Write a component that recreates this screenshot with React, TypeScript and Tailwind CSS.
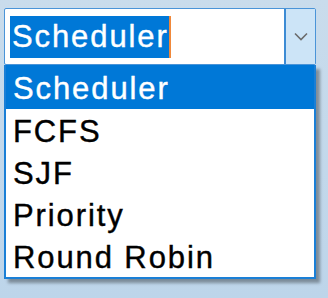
import React from 'react';

const options = ['Scheduler', 'FCFS', 'SJF', 'Priority', 'Round Robin'];

const Chevron = () => (
  <svg width="14" height="9" viewBox="0 0 14 9" fill="none">
    <path d="M1 1.5 L7 7.5 L13 1.5" stroke="#6b6b6b" strokeWidth="1.6" />
  </svg>
);

export default function App() {
  return (
    <div
      className="w-[328px] h-[298px] bg-gradient-to-b from-[#c9dcec] to-[#bdd5ea] pt-[8px] pl-[4px]"
      style={{ fontFamily: '"Liberation Sans", Arial, sans-serif' }}
    >
      <div className="w-[312px]">
        {/* combo box */}
        <div className="flex h-[57px] border border-[#4a94d8] bg-white rounded-[2px]">
          <div className="flex-1 flex items-center pl-[5px]">
            <span className="flex items-center h-[42px] bg-[#0078d7] text-white text-[31px] leading-none tracking-[1.9px] [-webkit-text-stroke:0.4px_currentColor] pl-[2px] border-r-2 border-[#f0883a]">
              Scheduler
            </span>
          </div>
          <div className="w-[31px] flex items-center justify-center bg-[#cce4f7] border-l-2 border-[#3c8bd4]">
            <Chevron />
          </div>
        </div>
        {/* drop-down list */}
        <div className="border-2 border-t-0 border-[#1a7fd6] bg-white shadow-[4px_4px_3px_rgba(0,0,0,0.35)]">
          {options.map((opt, i) => (
            <div
              key={opt}
              className={`flex items-center pl-[7px] pt-[3px] text-[31px] leading-none tracking-[1.9px] [-webkit-text-stroke:0.4px_currentColor] ${
                i === 0 ? 'bg-[#0078d7] text-white h-[44px]' : 'text-black h-[42px]'
              }`}
            >
              {opt}
            </div>
          ))}
        </div>
      </div>
    </div>
  );
}
